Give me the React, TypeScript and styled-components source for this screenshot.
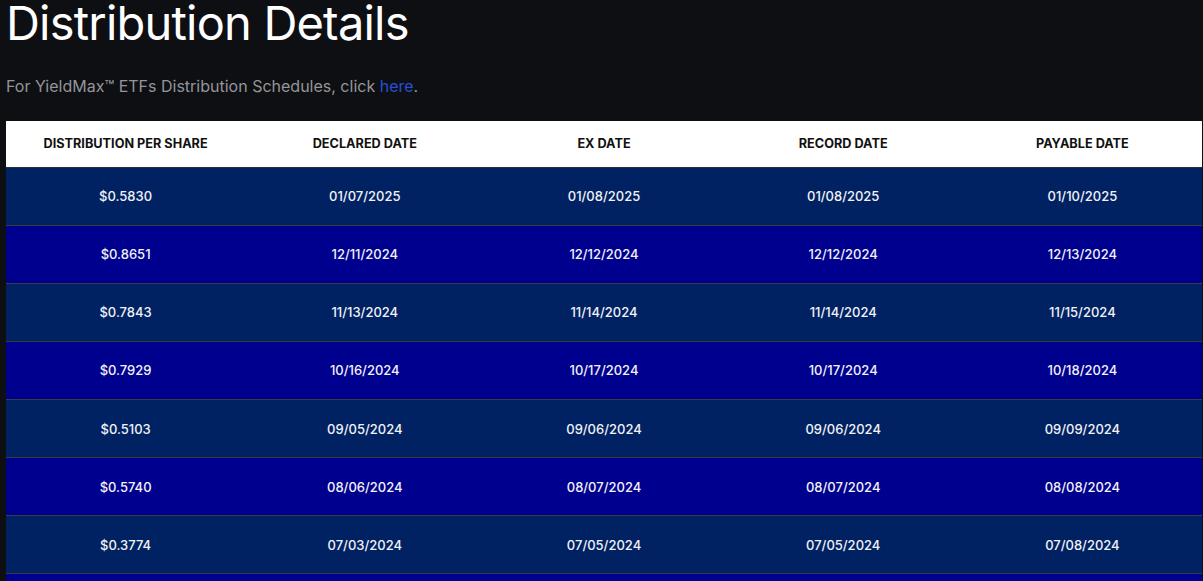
import React from "react";
import styled, { createGlobalStyle } from "styled-components";

const Global = createGlobalStyle`
  html, body { margin: 0; padding: 0; background: #0e0f13; }
  body { font-family: Inter, "Noto Sans", sans-serif; }
`;

const Page = styled.div`
  padding: 0 1px 0 6px;
`;

const Title = styled.h1`
  margin: 0;
  font-size: 47px;
  line-height: 46px;
  font-weight: 400;
  color: #ffffff;
  letter-spacing: -0.8px;
`;

const Subtitle = styled.p`
  margin: 28px 0 0 0;
  font-size: 16px;
  line-height: 24px;
  color: #94959a;
`;

const Link = styled.a`
  color: #2450d6;
  text-decoration: none;
`;

const Table = styled.div`
  margin-top: 23px;
  display: flex;
  flex-direction: column;
`;

const HeaderRow = styled.div`
  display: grid;
  grid-template-columns: repeat(5, 1fr);
  height: 45.5px;
  background: #ffffff;
  border-bottom: 1px solid #2b2f3a;
  align-items: center;
`;

const HeadCell = styled.div`
  text-align: center;
  font-size: 12.7px;
  font-weight: 700;
  color: #111111;
`;

const Row = styled.div<{ $alt: boolean }>`
  display: grid;
  grid-template-columns: repeat(5, 1fr);
  height: 57.15px;
  background: ${(p) => (p.$alt ? "#00008f" : "#002263")};
  border-bottom: 1px solid #3a3a40;
  align-items: center;
`;

const Cell = styled.div`
  text-align: center;
  font-size: 13px;
  font-weight: 500;
  color: #f2f2f5;
`;

const headers = [
  "DISTRIBUTION PER SHARE",
  "DECLARED DATE",
  "EX DATE",
  "RECORD DATE",
  "PAYABLE DATE",
];

const rows = [
  ["$0.5830", "01/07/2025", "01/08/2025", "01/08/2025", "01/10/2025"],
  ["$0.8651", "12/11/2024", "12/12/2024", "12/12/2024", "12/13/2024"],
  ["$0.7843", "11/13/2024", "11/14/2024", "11/14/2024", "11/15/2024"],
  ["$0.7929", "10/16/2024", "10/17/2024", "10/17/2024", "10/18/2024"],
  ["$0.5103", "09/05/2024", "09/06/2024", "09/06/2024", "09/09/2024"],
  ["$0.5740", "08/06/2024", "08/07/2024", "08/07/2024", "08/08/2024"],
  ["$0.3774", "07/03/2024", "07/05/2024", "07/05/2024", "07/08/2024"],
  ["$0.4210", "06/05/2024", "06/06/2024", "06/06/2024", "06/07/2024"],
];

export default function App() {
  return (
    <Page>
      <Global />
      <Title>Distribution Details</Title>
      <Subtitle>
        For YieldMax™ ETFs Distribution Schedules, click <Link href="#">here</Link>.
      </Subtitle>
      <Table>
        <HeaderRow>
          {headers.map((h) => (
            <HeadCell key={h}>{h}</HeadCell>
          ))}
        </HeaderRow>
        {rows.map((r, i) => (
          <Row key={i} $alt={i % 2 === 1}>
            {r.map((c, j) => (
              <Cell key={j}>{c}</Cell>
            ))}
          </Row>
        ))}
      </Table>
    </Page>
  );
}
